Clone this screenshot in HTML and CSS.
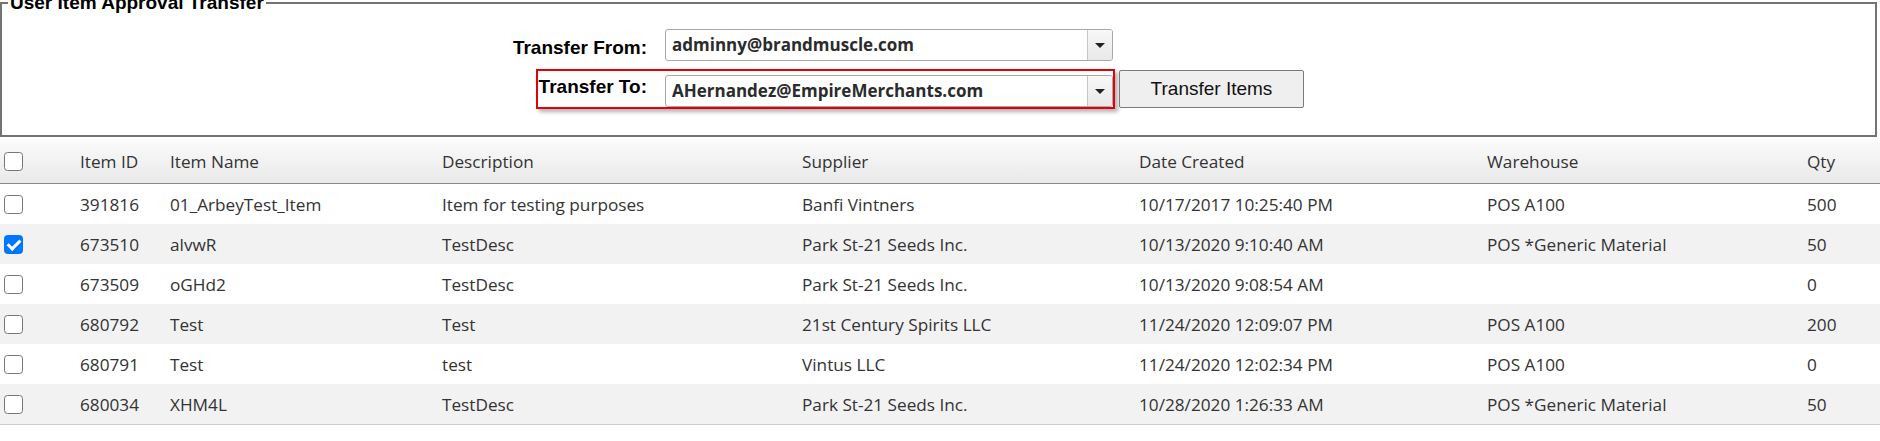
FILE: index.html
```
<!DOCTYPE html>
<html lang="en">
<head>
<meta charset="utf-8">
<title>User Item Approval Transfer</title>
<link rel="stylesheet" href="styles.css">
</head>
<body>
<fieldset class="panel">
  <legend class="panel-title">User Item Approval Transfer</legend>
  <div class="form">
    <div class="row-from">
      <label class="lbl">Transfer From:</label>
      <div class="dd">
        <span class="dd-val">adminny@brandmuscle.com</span>
        <span class="dd-arrow"><svg width="10" height="5" viewBox="0 0 10 5"><polygon points="0,0 10,0 5,5" fill="#222"/></svg></span>
      </div>
    </div>
    <div class="row-to">
      <div class="hl">
        <label class="lbl lbl-to">Transfer To:</label>
        <div class="dd">
          <span class="dd-val">AHernandez@EmpireMerchants.com</span>
          <span class="dd-arrow"><svg width="10" height="5" viewBox="0 0 10 5"><polygon points="0,0 10,0 5,5" fill="#222"/></svg></span>
        </div>
      </div>
      <button class="btn" type="button">Transfer Items</button>
    </div>
  </div>
</fieldset>
<table class="grid">
  <colgroup>
    <col class="c-cb"><col class="c-id"><col class="c-name"><col class="c-desc"><col class="c-sup"><col class="c-date"><col class="c-wh"><col class="c-qty">
  </colgroup>
  <thead>
    <tr>
      <th class="cbcell"><input type="checkbox" class="cb"></th>
      <th>Item ID</th><th>Item Name</th><th>Description</th><th>Supplier</th><th>Date Created</th><th>Warehouse</th><th>Qty</th>
    </tr>
  </thead>
  <tbody>
    <tr>
      <td class="cbcell"><input type="checkbox" class="cb"></td>
      <td>391816</td><td>01_ArbeyTest_Item</td><td>Item for testing purposes</td><td>Banfi Vintners</td><td>10/17/2017 10:25:40 PM</td><td>POS A100</td><td>500</td>
    </tr>
    <tr>
      <td class="cbcell"><input type="checkbox" class="cb" checked></td>
      <td>673510</td><td>alvwR</td><td>TestDesc</td><td>Park St-21 Seeds Inc.</td><td>10/13/2020 9:10:40 AM</td><td>POS *Generic Material</td><td>50</td>
    </tr>
    <tr>
      <td class="cbcell"><input type="checkbox" class="cb"></td>
      <td>673509</td><td>oGHd2</td><td>TestDesc</td><td>Park St-21 Seeds Inc.</td><td>10/13/2020 9:08:54 AM</td><td></td><td>0</td>
    </tr>
    <tr>
      <td class="cbcell"><input type="checkbox" class="cb"></td>
      <td>680792</td><td>Test</td><td>Test</td><td>21st Century Spirits LLC</td><td>11/24/2020 12:09:07 PM</td><td>POS A100</td><td>200</td>
    </tr>
    <tr>
      <td class="cbcell"><input type="checkbox" class="cb"></td>
      <td>680791</td><td>Test</td><td>test</td><td>Vintus LLC</td><td>11/24/2020 12:02:34 PM</td><td>POS A100</td><td>0</td>
    </tr>
    <tr>
      <td class="cbcell"><input type="checkbox" class="cb"></td>
      <td>680034</td><td>XHM4L</td><td>TestDesc</td><td>Park St-21 Seeds Inc.</td><td>10/28/2020 1:26:33 AM</td><td>POS *Generic Material</td><td>50</td>
    </tr>
  </tbody>
</table>
</body>
</html>
```
FILE: styles.css
```
* { box-sizing: border-box; }
html, body { margin: 0; padding: 0; background: #fff; }
body {
  width: 1880px;
  height: 441px;
  overflow: hidden;
  font-family: "Liberation Sans", Arial, sans-serif;
  color: #000;
}

.panel {
  margin: -8px 3px 2px 0;
  border: 2px solid #737373;
  padding: 15px 0 26px 0;
  min-width: 0;
}
.panel-title {
  margin-left: 6px;
  padding: 0 2px;
  font: bold 19px/22px "Liberation Sans", Arial, sans-serif;
  color: #000;
}

.form {
  margin-left: 493px;
  display: flex;
  flex-direction: column;
  gap: 8px;
}
.row-from {
  display: flex;
  align-items: flex-start;
  height: 32px;
}
.lbl {
  width: 152px;
  flex: none;
  display: flex;
  justify-content: flex-end;
  margin-top: 8px;
  margin-right: 18px;
  font: bold 19px/22px "Liberation Sans", Arial, sans-serif;
  white-space: nowrap;
  color: #000;
}
.row-to {
  display: flex;
  align-items: center;
  margin-left: 41px;
}
.hl {
  display: flex;
  align-items: flex-start;
  border: 2px solid #e3000b;
  padding-top: 4px;
  box-shadow: 3px 3px 4px rgba(0, 0, 0, 0.3);
}
.lbl-to {
  width: 109px;
  margin-top: 1px;
}

.dd {
  width: 448px;
  height: 32px;
  flex: none;
  display: flex;
  border: 1px solid #a9a9a9;
  border-radius: 3px;
  background: #fff;
  overflow: hidden;
}
.dd-val {
  flex: 1;
  padding-left: 6px;
  font: bold 17px/30px "Open Sans", "Liberation Sans", sans-serif;
  color: #2b2b2b;
  white-space: nowrap;
  overflow: hidden;
}
.dd-arrow {
  width: 25px;
  flex: none;
  display: flex;
  align-items: center;
  justify-content: center;
  border-left: 1px solid #c6c6c6;
  background: linear-gradient(#f8f8f8, #e9e9e9);
}
.dd-arrow svg { display: block; }

.btn {
  margin-left: 4px;
  width: 185px;
  height: 38px;
  padding: 0;
  border: 1px solid #7a7a7a;
  border-radius: 2px;
  background: #efefef;
  font: 19px "Liberation Sans", Arial, sans-serif;
  color: #111;
}

.grid {
  width: 1880px;
  border-collapse: separate;
  border-spacing: 0;
  table-layout: fixed;
  font-family: "Open Sans", "Liberation Sans", sans-serif;
  font-size: 17.2px;
  color: #333;
}
.c-cb { width: 80px; }
.c-id { width: 90px; }
.c-name { width: 272px; }
.c-desc { width: 360px; }
.c-sup { width: 337px; }
.c-date { width: 348px; }
.c-wh { width: 320px; }
.c-qty { width: 73px; }

.grid th {
  height: 45px;
  padding: 0;
  text-align: left;
  font-weight: normal;
  vertical-align: middle;
  white-space: nowrap;
  background: linear-gradient(#fbfbfb, #e9e9e9);
  border-bottom: 1px solid #888;
}
.grid td {
  height: 40px;
  padding: 0;
  vertical-align: middle;
  white-space: nowrap;
}
.grid tbody tr:nth-child(even) td { background: #f2f2f2; }
.grid tbody tr:last-child td {
  height: 41px;
  border-bottom: 1px solid #ccc;
}
.cbcell { padding-left: 4px !important; }

.cb {
  -webkit-appearance: none;
  appearance: none;
  display: block;
  position: relative;
  width: 19px;
  height: 19px;
  margin: 0;
  border: 1.5px solid #767676;
  border-radius: 3.5px;
  background: #fff;
}
.cb:checked {
  background: #0075ff;
  border-color: #0075ff;
}
.cb:checked::after {
  content: "";
  position: absolute;
  left: 5px;
  top: 1.5px;
  width: 5px;
  height: 10px;
  border: solid #fff;
  border-width: 0 3px 3px 0;
  transform: rotate(45deg);
}
```
